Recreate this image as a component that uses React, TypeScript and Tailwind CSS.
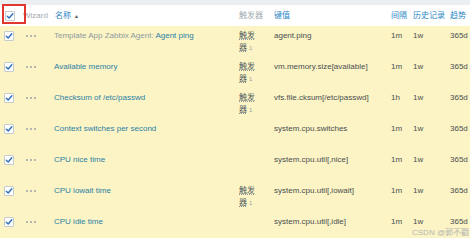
import React from "react";

interface ItemRow {
    name: string;
    prefix?: string;
    triggers?: number;
    itemKey: string;
    interval: string;
}

const rows: ItemRow[] = [
    { prefix: "Template App Zabbix Agent", name: "Agent ping", triggers: 1, itemKey: "agent.ping", interval: "1m" },
    { name: "Available memory", triggers: 1, itemKey: "vm.memory.size[available]", interval: "1m" },
    { name: "Checksum of /etc/passwd", triggers: 1, itemKey: "vfs.file.cksum[/etc/passwd]", interval: "1h" },
    { name: "Context switches per second", itemKey: "system.cpu.switches", interval: "1m" },
    { name: "CPU nice time", itemKey: "system.cpu.util[,nice]", interval: "1m" },
    { name: "CPU iowait time", triggers: 1, itemKey: "system.cpu.util[,iowait]", interval: "1m" },
    { name: "CPU idle time", itemKey: "system.cpu.util[,idle]", interval: "1m" },
];

const cols = "grid grid-cols-[22px_32px_185px_35px_117px_22px_37px_20px]";

const Checkbox = () => (
    <span className="flex h-[10px] w-[10px] items-center justify-center rounded-[1px] border border-[#c5ccd0] bg-white">
        <svg width="8" height="8" viewBox="0 0 8 8" fill="none">
            <path d="M1.3 4.2 L3.2 6 L6.8 1.8" stroke="#2f6fb8" strokeWidth="1.4" strokeLinecap="round" strokeLinejoin="round" />
        </svg>
    </span>
);

const Dots = () => (
    <span className="flex h-[12px] items-center gap-[2px]">
        <span className="h-[2px] w-[2px] rounded-full bg-[#9aa3a8]" />
        <span className="h-[2px] w-[2px] rounded-full bg-[#9aa3a8]" />
        <span className="h-[2px] w-[2px] rounded-full bg-[#9aa3a8]" />
    </span>
);

// "触发器" wraps in the narrow column, count sits after the last char
const TriggerLink = ({ count }: { count: number }) => (
    <div className="flex flex-col text-[#4d5a60]">
        <span className="w-fit underline decoration-dotted decoration-[#8a969c] underline-offset-1">触发</span>
        <span className="flex items-center gap-[2px]">
            <span className="underline decoration-dotted decoration-[#8a969c] underline-offset-1">器</span>
            <span className="text-[6px] leading-[8px] text-[#9aa3a8]">{count}</span>
        </span>
    </div>
);

const App = () => {
    return (
        <div className="relative h-[242px] w-[474px] overflow-hidden bg-white text-[8px] leading-[12px]" style={{ fontFamily: '"Liberation Sans", "Noto Sans CJK SC", sans-serif' }}>
            <div className="h-[5px] w-[470px] bg-[#eceff2]" />
            {/* header */}
            <div className={`${cols} h-[21px] w-[470px] items-center bg-white`}>
                <div className="pl-[5px] pt-[1px]">
                    <Checkbox />
                </div>
                <div className="pl-px text-[#a3abaf]">Wizard</div>
                <div className="flex items-center gap-[3px] pl-px text-[#2b86c5]">
                    名称
                    <span className="text-[5px] text-[#555]">▲</span>
                </div>
                <div className="text-[#a3abaf]">触发器</div>
                <div className="text-[#2b86c5]">键值</div>
                <div className="text-[#2b86c5]">间隔</div>
                <div className="text-[#2b86c5]">历史记录</div>
                <div className="text-[#2b86c5]">趋势</div>
            </div>
            <div className="absolute left-[2px] top-[4px] h-[20px] w-[24px] border-2 border-[#e2372f]" />

            {/* rows */}
            <div className="h-[212px] w-[470px] overflow-hidden bg-[#fcf4c4]">
                {rows.map((row) => (
                    <div key={row.itemKey} className={`${cols} h-[31px] items-start pt-[4px]`}>
                        <div className="pl-[4px] pt-px">
                            <Checkbox />
                        </div>
                        <div className="pl-[4px]">
                            <Dots />
                        </div>
                        <div className="truncate">
                            {row.prefix && <span className="text-[#8c9aa0]">{row.prefix}: </span>}
                            <span className="text-[#2a7fa6]">{row.name}</span>
                        </div>
                        <div>{row.triggers ? <TriggerLink count={row.triggers} /> : null}</div>
                        <div className="text-[#4a4f52]">{row.itemKey}</div>
                        <div className="text-[#4a4f52]">{row.interval}</div>
                        <div className="text-[#4a4f52]">1w</div>
                        <div className="text-[#4a4f52]">365d</div>
                    </div>
                ))}
            </div>

            <div className="absolute left-[412px] top-[227px] text-[8px] text-[#b3b6b8]">CSDN @郭不戳</div>
        </div>
    );
};

export default App;
